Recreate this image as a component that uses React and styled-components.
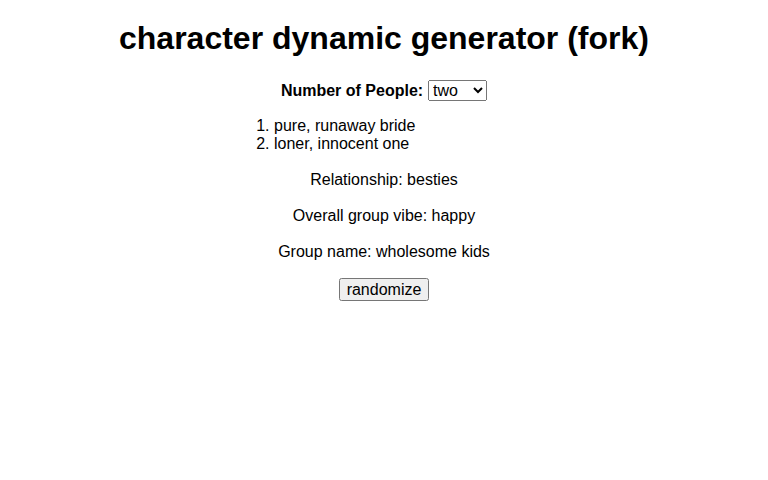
import React, { useState } from 'react';
import styled, { createGlobalStyle } from 'styled-components';

const Global = createGlobalStyle`
body {
    margin: 0 8px;
    font-family: "Liberation Sans", Arial, sans-serif;
    color: #000;
    background: #fff;
}
`;

const Page = styled.div`
    text-align: center;
`;

const Title = styled.h1`
    font-size: 32px;
    font-weight: bold;
    margin: 20px 0 23px;
`;

const PeopleRow = styled.div`
    display: flex;
    justify-content: center;
    align-items: center;
    gap: 5px;
    height: 21px;

    label {
        font-weight: bold;
        font-size: 16px;
    }
    select {
        font-family: "Liberation Sans", Arial, sans-serif;
        font-size: 16px;
        height: 21px;
    }
`;

const List = styled.ol`
    width: 300px;
    margin: 16px auto 16px;
    padding-left: 40px;
    box-sizing: border-box;
    text-align: left;
    line-height: 18.4px;
`;

const Line = styled.p`
    margin: 16px 0;
    line-height: 20px;
`;

const Button = styled.button`
    font-family: "Liberation Sans", Arial, sans-serif;
    font-size: 16px;
    padding: 1px 6px;
    height: 23px;
`;

const people = ['pure, runaway bride', 'loner, innocent one'];

const App = () => {
    const [count, setCount] = useState('two');
    return (
        <Page>
            <Global />
            <Title>character dynamic generator (fork)</Title>
            <PeopleRow>
                <label htmlFor="num">Number of People:</label>
                <select id="num" value={count} onChange={e => setCount(e.target.value)}>
                    <option value="two">two</option>
                    <option value="three">three</option>
                    <option value="four">four</option>
                </select>
            </PeopleRow>
            <List>
                {people.map(p => <li key={p}>{p}</li>)}
            </List>
            <Line>Relationship: besties</Line>
            <Line>Overall group vibe: happy</Line>
            <Line>Group name: wholesome kids</Line>
            <Button>randomize</Button>
        </Page>
    );
};

export default App;
